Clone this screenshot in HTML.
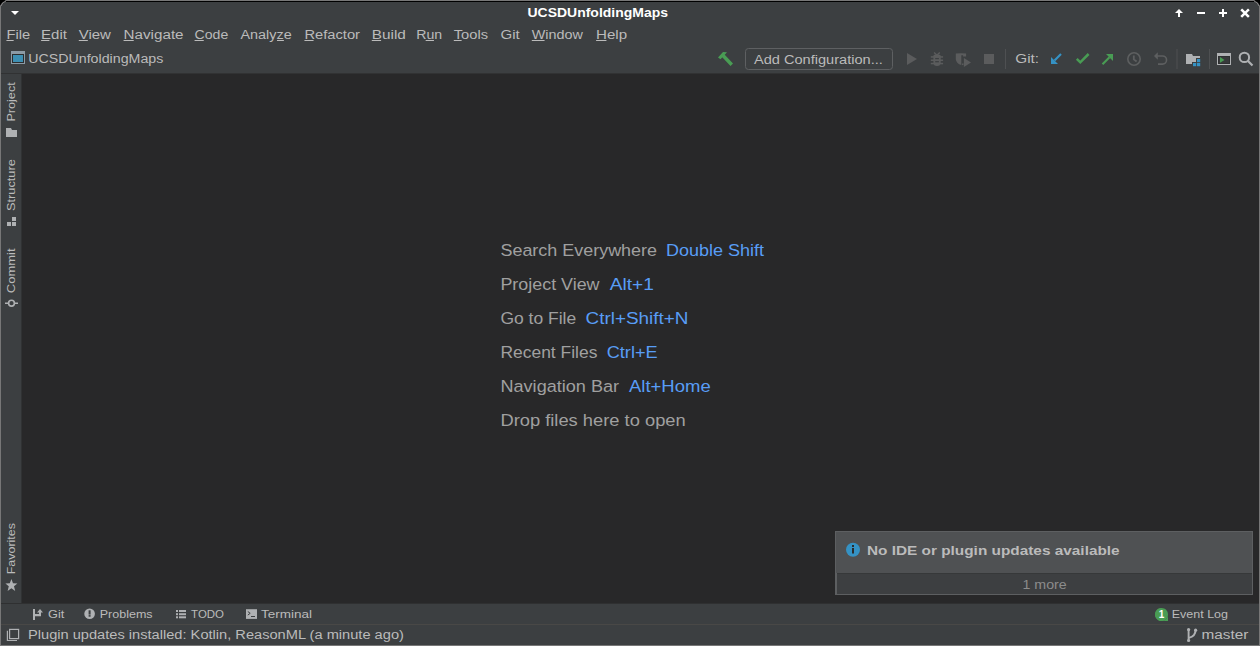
<!DOCTYPE html>
<html><head><meta charset="utf-8"><style>
html,body{margin:0;padding:0;background:#3c3f41;}
body{width:1260px;height:646px;overflow:hidden;position:relative;}
svg{position:absolute;left:0;top:0;display:block;}
text{font-family:"Liberation Sans",sans-serif;}
</style></head><body>
<svg width="1260" height="646" viewBox="0 0 1260 646" shape-rendering="geometricPrecision">
<rect x="0" y="0" width="1260" height="646" fill="#777777" />
<rect x="1" y="1" width="1258" height="644" fill="#3c3f41" />
<rect x="1" y="1" width="1258" height="1" fill="#000000" />
<path d="M0 0 H6 Q2 2 0 6 Z" fill="#000"/>
<path d="M1260 0 H1254 Q1258 2 1260 6 Z" fill="#000"/>
<path d="M1 6 Q2 2 6 1" stroke="#8a8a8a" stroke-width="1" fill="none"/>
<path d="M1259 6 Q1258 2 1254 1" stroke="#8a8a8a" stroke-width="1" fill="none"/>
<rect x="1" y="73" width="1258" height="1" fill="#313233" />
<rect x="1" y="74" width="20" height="529" fill="#3c3f41" />
<rect x="21" y="74" width="1" height="529" fill="#303233" />
<rect x="22" y="74" width="1237" height="529" fill="#282829" />
<rect x="1" y="603" width="1258" height="1" fill="#2f3031" />
<rect x="1" y="604" width="1258" height="20" fill="#3c3f41" />
<rect x="1" y="624" width="1258" height="1" fill="#494846" />
<rect x="1" y="625" width="1258" height="20" fill="#3c3f41" />
<path d="M11 11 H19 L15 15 Z" fill="#fff"/>
<path d="M1175 13 L1179 9 L1183 13 Z" fill="#fff"/><rect x="1178" y="12" width="2" height="5" fill="#fff"/>
<rect x="1197" y="12" width="8" height="2" fill="#fff"/>
<rect x="1219" y="12" width="8" height="2" fill="#fff"/><rect x="1222" y="9" width="2" height="8" fill="#fff"/>
<path d="M1242.1 10.2 L1248 16.1 M1248 10.2 L1242.1 16.1" stroke="#fff" stroke-width="2.5" stroke-linecap="square"/>
<rect x="6.44" y="40" width="7.21" height="1" fill="#bbbbbb" />
<rect x="41.10" y="40" width="8.29" height="1" fill="#bbbbbb" />
<rect x="78.80" y="40" width="9.03" height="1" fill="#bbbbbb" />
<rect x="123.56" y="40" width="10.17" height="1" fill="#bbbbbb" />
<rect x="194.56" y="40" width="9.19" height="1" fill="#bbbbbb" />
<rect x="276.98" y="40" width="6.91" height="1" fill="#bbbbbb" />
<rect x="304.44" y="40" width="9.09" height="1" fill="#bbbbbb" />
<rect x="371.78" y="40" width="9.31" height="1" fill="#bbbbbb" />
<rect x="425.65" y="40" width="8.29" height="1" fill="#bbbbbb" />
<rect x="453.80" y="40" width="7.82" height="1" fill="#bbbbbb" />
<rect x="531.80" y="40" width="12.77" height="1" fill="#bbbbbb" />
<rect x="596.10" y="40" width="10.34" height="1" fill="#bbbbbb" />
<rect x="11" y="51" width="14" height="13" fill="#8c9aa5"/><rect x="12" y="54" width="12" height="9" fill="#2b2d2e"/><rect x="13" y="55" width="10" height="7" fill="#3d8fb3"/>
<path d="M718 57.5 L723 52 L727 52.3 L724.5 55 L720.5 59.3 Z M722 57 L724.5 54.5 L733 63.5 L730.5 66 Z" fill="#499c54"/>
<rect x="745.5" y="48.5" width="147" height="21" rx="3" ry="3" fill="none" stroke="#5e6062" stroke-width="1"/>
<path d="M907 53 L917 59 L907 65 Z" fill="#5b5c5d"/>
<g fill="#5b5c5d"><path d="M934.1 52.4 L936.9 55.3 L939.8 52.4" stroke="#5b5c5d" stroke-width="1.4" fill="none"/><path d="M933.4 56 Q933.4 54.6 937 54.6 Q940.7 54.6 940.7 56 L940.7 62.5 Q940.7 66.1 937 66.1 Q933.4 66.1 933.4 62.5 Z"/><rect x="930.8" y="56.2" width="12.3" height="1.5"/><rect x="930.8" y="59.5" width="12.3" height="1.5"/><rect x="930.8" y="62.8" width="12.3" height="1.5"/></g><rect x="935.2" y="58.0" width="3.7" height="1.2" fill="#3c3f41"/><rect x="935.2" y="61.1" width="3.7" height="1.2" fill="#3c3f41"/>
<path d="M955.8 53.4 Q961 52.9 966.1 53.4 L966.1 56.5 L963.1 56.5 L963.1 55.3 L961.3 55.3 L961.3 65.1 Q956.5 63.5 955.8 59.5 Z" fill="#5b5c5d"/><path d="M962 63.6 L963.6 63.6 L963.6 64.8 L962 65.2 Z" fill="#5b5c5d"/><path d="M963.9 57.9 L971 62.4 L963.9 66.9 Z" fill="#5b5c5d"/>
<rect x="984" y="54" width="10" height="10" fill="#5b5c5d"/>
<rect x="1005" y="49" width="1" height="20" fill="#4e5052"/>
<path d="M1061 54 L1054.5 60.5" stroke="#3592c4" stroke-width="2.2"/><path d="M1051 57 L1051 64 L1058 64 Z" fill="#3592c4"/>
<path d="M1076.8 58.8 L1080.3 62.3 L1088.6 54" stroke="#499c54" stroke-width="2.5" fill="none"/>
<path d="M1102.5 64.2 L1109.5 57.2" stroke="#499c54" stroke-width="2.2"/><path d="M1106 54 L1113 54 L1113 61 Z" fill="#499c54"/>
<circle cx="1134" cy="59" r="6.2" fill="none" stroke="#5d5f60" stroke-width="1.6"/><path d="M1133.8 55.6 L1133.8 59.4 L1136.6 61.5" stroke="#5d5f60" stroke-width="1.8" fill="none"/>
<path d="M1157 56 L1162.5 56 A4.05 4.05 0 0 1 1162.5 64.1 L1158 64.1" stroke="#5d5f60" stroke-width="1.6" fill="none"/><path d="M1154 56 L1157.8 52.2 L1157.8 59.8 Z" fill="#5d5f60"/>
<rect x="1176.5" y="49" width="1" height="20" fill="#4e5052"/>
<path d="M1186 54 L1192 54 L1193 56 L1200 56 L1200 58 L1196 58 L1196 62 L1192 62 L1192 64 L1186 64 Z" fill="#afb1b3"/><rect x="1197" y="59" width="3.2" height="3.2" fill="#3592c4"/><rect x="1193" y="63" width="3.2" height="3.2" fill="#3592c4"/><rect x="1197" y="63" width="3.2" height="3.2" fill="#3592c4"/>
<rect x="1209" y="49" width="1" height="20" fill="#4e5052"/>
<rect x="1217" y="53" width="14" height="12" fill="#afb1b3"/><rect x="1218" y="56" width="12" height="8" fill="#2e3031"/><rect x="1219" y="57" width="10" height="6" fill="#38393b"/><path d="M1220 57 L1224.5 59.9 L1220 62.8 Z" fill="#499c54"/>
<circle cx="1244.4" cy="57.4" r="4.7" fill="none" stroke="#afb1b3" stroke-width="2"/><path d="M1248 61 L1252.5 65.5" stroke="#afb1b3" stroke-width="2.2"/>
<path d="M6 128 L11 128 L12 130 L17 130 L17 137 L6 137 Z" fill="#afb1b3"/>
<rect x="12" y="217" width="4" height="4" fill="#afb1b3"/><rect x="7" y="222" width="4" height="4" fill="#afb1b3"/><rect x="12" y="222" width="4" height="4" fill="#afb1b3"/>
<circle cx="11.5" cy="303.2" r="2.9" fill="none" stroke="#afb1b3" stroke-width="1.6"/><path d="M5 303.2 H8.6 M14.4 303.2 H18" stroke="#afb1b3" stroke-width="1.6"/>
<path d="M11.4 579 L13 583.3 L17.4 583.4 L14 586.2 L15.2 591 L11.4 588.3 L7.6 591 L8.8 586.2 L5.4 583.4 L9.8 583.3 Z" fill="#afb1b3"/>
<rect x="835" y="531" width="418" height="64" fill="#5d5f61" />
<rect x="836" y="532" width="416" height="41" fill="#4f5153" />
<rect x="837" y="573" width="415" height="21" fill="#3d3f41" />
<rect x="837" y="573" width="415" height="1" fill="#363839" />
<rect x="836" y="573" width="1" height="21" fill="#5d5f61" />
<circle cx="853" cy="549.8" r="7" fill="#3592c4"/><rect x="852" y="548" width="2" height="5.5" fill="#2b2b2b"/><rect x="852" y="545" width="2" height="2" fill="#2b2b2b"/>
<path d="M33 609 H35 V614 H39 V612.5 H37 L40 609 L43 612.5 H41 V616.3 H35 V620 H33 Z" fill="#afb1b3"/>
<circle cx="89.6" cy="613.8" r="5.3" fill="#afb1b3"/><rect x="88.6" y="610.3" width="2" height="4.3" fill="#3c3f41"/><rect x="88.6" y="615.1" width="2" height="1.6" fill="#3c3f41"/>
<g fill="#afb1b3"><rect x="176" y="610" width="2" height="2"/><rect x="179" y="610" width="7" height="2"/><rect x="176" y="613.2" width="2" height="2"/><rect x="179" y="613.2" width="7" height="2"/><rect x="176" y="616.3" width="2" height="2"/><rect x="179" y="616.3" width="7" height="2"/></g>
<rect x="246" y="609.2" width="11" height="9.7" fill="#afb1b3"/><path d="M247.8 611.5 L250.2 613.3 L247.8 615.1" stroke="#3c3f41" stroke-width="1" fill="none"/><rect x="251" y="616" width="4" height="1" fill="#3c3f41"/>
<path d="M1161.5 608 A6.5 6.5 0 1 0 1168 614.5 L1168 621 L1161.5 621 Z" fill="#499c54"/>
<path d="M1161.5 608 a6.5 6.5 0 1 0 0.01 0 Z" fill="#499c54"/>
<rect x="9.6" y="629.4" width="9" height="9.2" fill="none" stroke="#afb1b3" stroke-width="1.2"/><path d="M7.4 630.8 V640.5 H17" fill="none" stroke="#afb1b3" stroke-width="1.2"/>
<g stroke="#afb1b3" stroke-width="1.9" fill="none"><path d="M1188.6 629.5 V640.5"/><path d="M1195.6 630 Q1195.6 636.2 1188.8 637.8"/></g><g fill="#afb1b3"><circle cx="1188.6" cy="629.6" r="1.6"/><circle cx="1188.6" cy="640.5" r="1.6"/><circle cx="1195.6" cy="630.2" r="1.6"/></g>
<text x="527.46" y="17.00" font-size="12.48" font-weight="bold" fill="#ffffff" textLength="140.54" lengthAdjust="spacingAndGlyphs">UCSDUnfoldingMaps</text>
<text x="6.44" y="39.00" font-size="13.52" font-weight="normal" fill="#bbbbbb" textLength="23.68" lengthAdjust="spacingAndGlyphs">File</text>
<text x="41.10" y="39.00" font-size="13.52" font-weight="normal" fill="#bbbbbb" textLength="25.90" lengthAdjust="spacingAndGlyphs">Edit</text>
<text x="78.80" y="39.00" font-size="13.52" font-weight="normal" fill="#bbbbbb" textLength="32.10" lengthAdjust="spacingAndGlyphs">View</text>
<text x="123.56" y="39.00" font-size="13.52" font-weight="normal" fill="#bbbbbb" textLength="60.02" lengthAdjust="spacingAndGlyphs">Navigate</text>
<text x="194.56" y="39.00" font-size="13.52" font-weight="normal" fill="#bbbbbb" textLength="33.68" lengthAdjust="spacingAndGlyphs">Code</text>
<text x="240.48" y="39.00" font-size="13.52" font-weight="normal" fill="#bbbbbb" textLength="51.30" lengthAdjust="spacingAndGlyphs">Analyze</text>
<text x="304.44" y="39.00" font-size="13.52" font-weight="normal" fill="#bbbbbb" textLength="55.56" lengthAdjust="spacingAndGlyphs">Refactor</text>
<text x="371.78" y="39.00" font-size="13.52" font-weight="normal" fill="#bbbbbb" textLength="34.14" lengthAdjust="spacingAndGlyphs">Build</text>
<text x="416.32" y="39.00" font-size="13.52" font-weight="normal" fill="#bbbbbb" textLength="25.92" lengthAdjust="spacingAndGlyphs">Run</text>
<text x="453.80" y="39.00" font-size="13.52" font-weight="normal" fill="#bbbbbb" textLength="34.20" lengthAdjust="spacingAndGlyphs">Tools</text>
<text x="500.56" y="39.00" font-size="13.52" font-weight="normal" fill="#bbbbbb" textLength="19.22" lengthAdjust="spacingAndGlyphs">Git</text>
<text x="531.80" y="39.00" font-size="13.52" font-weight="normal" fill="#bbbbbb" textLength="51.08" lengthAdjust="spacingAndGlyphs">Window</text>
<text x="596.10" y="39.00" font-size="13.52" font-weight="normal" fill="#bbbbbb" textLength="31.02" lengthAdjust="spacingAndGlyphs">Help</text>
<text x="28.22" y="63.00" font-size="13.52" font-weight="normal" fill="#bbbbbb" textLength="135.08" lengthAdjust="spacingAndGlyphs">UCSDUnfoldingMaps</text>
<text x="754.02" y="64.00" font-size="13.52" font-weight="normal" fill="#bbbbbb" textLength="128.78" lengthAdjust="spacingAndGlyphs">Add Configuration...</text>
<text x="1015.24" y="63.00" font-size="13.52" font-weight="normal" fill="#bbbbbb" textLength="23.80" lengthAdjust="spacingAndGlyphs">Git:</text>
<text transform="translate(15.2,121.6) rotate(-90)" x="0" y="0" font-size="11.4" fill="#bbbbbb" textLength="39.30" lengthAdjust="spacingAndGlyphs">Project</text>
<text transform="translate(15.4,211.1) rotate(-90)" x="0" y="0" font-size="11.4" fill="#bbbbbb" textLength="52.00" lengthAdjust="spacingAndGlyphs">Structure</text>
<text transform="translate(15.4,293.2) rotate(-90)" x="0" y="0" font-size="11.4" fill="#bbbbbb" textLength="44.80" lengthAdjust="spacingAndGlyphs">Commit</text>
<text transform="translate(14.9,574.3) rotate(-90)" x="0" y="0" font-size="11.4" fill="#bbbbbb" textLength="51.20" lengthAdjust="spacingAndGlyphs">Favorites</text>
<text x="500.44" y="256.00" font-size="16.64" font-weight="normal" fill="#a0a0a0" textLength="156.58" lengthAdjust="spacingAndGlyphs">Search Everywhere</text>
<text x="665.98" y="256.00" font-size="16.64" font-weight="normal" fill="#589df6" textLength="98.14" lengthAdjust="spacingAndGlyphs">Double Shift</text>
<text x="500.44" y="290.00" font-size="16.64" font-weight="normal" fill="#a0a0a0" textLength="99.12" lengthAdjust="spacingAndGlyphs">Project View</text>
<text x="609.80" y="290.00" font-size="16.64" font-weight="normal" fill="#589df6" textLength="44.12" lengthAdjust="spacingAndGlyphs">Alt+1</text>
<text x="500.44" y="324.00" font-size="16.64" font-weight="normal" fill="#a0a0a0" textLength="75.80" lengthAdjust="spacingAndGlyphs">Go to File</text>
<text x="585.56" y="324.00" font-size="16.64" font-weight="normal" fill="#589df6" textLength="102.92" lengthAdjust="spacingAndGlyphs">Ctrl+Shift+N</text>
<text x="500.44" y="358.00" font-size="16.64" font-weight="normal" fill="#a0a0a0" textLength="96.92" lengthAdjust="spacingAndGlyphs">Recent Files</text>
<text x="606.68" y="358.00" font-size="16.64" font-weight="normal" fill="#589df6" textLength="51.00" lengthAdjust="spacingAndGlyphs">Ctrl+E</text>
<text x="500.44" y="392.00" font-size="16.64" font-weight="normal" fill="#a0a0a0" textLength="118.68" lengthAdjust="spacingAndGlyphs">Navigation Bar</text>
<text x="629.02" y="392.00" font-size="16.64" font-weight="normal" fill="#589df6" textLength="81.66" lengthAdjust="spacingAndGlyphs">Alt+Home</text>
<text x="500.44" y="426.00" font-size="16.64" font-weight="normal" fill="#a0a0a0" textLength="185.26" lengthAdjust="spacingAndGlyphs">Drop files here to open</text>
<text x="866.90" y="555.00" font-size="13.52" font-weight="bold" fill="#bbbbbb" textLength="252.78" lengthAdjust="spacingAndGlyphs">No IDE or plugin updates available</text>
<text x="1022.44" y="589.00" font-size="12.48" font-weight="normal" fill="#8c8c8c" textLength="44.24" lengthAdjust="spacingAndGlyphs">1 more</text>
<text x="48.02" y="618.00" font-size="11.44" font-weight="normal" fill="#bbbbbb" textLength="16.32" lengthAdjust="spacingAndGlyphs">Git</text>
<text x="99.78" y="618.00" font-size="11.44" font-weight="normal" fill="#bbbbbb" textLength="52.78" lengthAdjust="spacingAndGlyphs">Problems</text>
<text x="191.12" y="618.00" font-size="11.44" font-weight="normal" fill="#bbbbbb" textLength="32.90" lengthAdjust="spacingAndGlyphs">TODO</text>
<text x="261.02" y="618.00" font-size="11.44" font-weight="normal" fill="#bbbbbb" textLength="51.00" lengthAdjust="spacingAndGlyphs">Terminal</text>
<text x="1161.6" y="618.3" font-size="10" font-weight="bold" fill="#ffffff" text-anchor="middle">1</text>
<text x="1171.76" y="618.00" font-size="11.44" font-weight="normal" fill="#bbbbbb" textLength="56.28" lengthAdjust="spacingAndGlyphs">Event Log</text>
<text x="28.00" y="639.00" font-size="13.52" font-weight="normal" fill="#bbbbbb" textLength="375.90" lengthAdjust="spacingAndGlyphs">Plugin updates installed: Kotlin, ReasonML (a minute ago)</text>
<text x="1201.56" y="639.00" font-size="13.52" font-weight="normal" fill="#bbbbbb" textLength="46.88" lengthAdjust="spacingAndGlyphs">master</text>
</svg>
</body></html>
